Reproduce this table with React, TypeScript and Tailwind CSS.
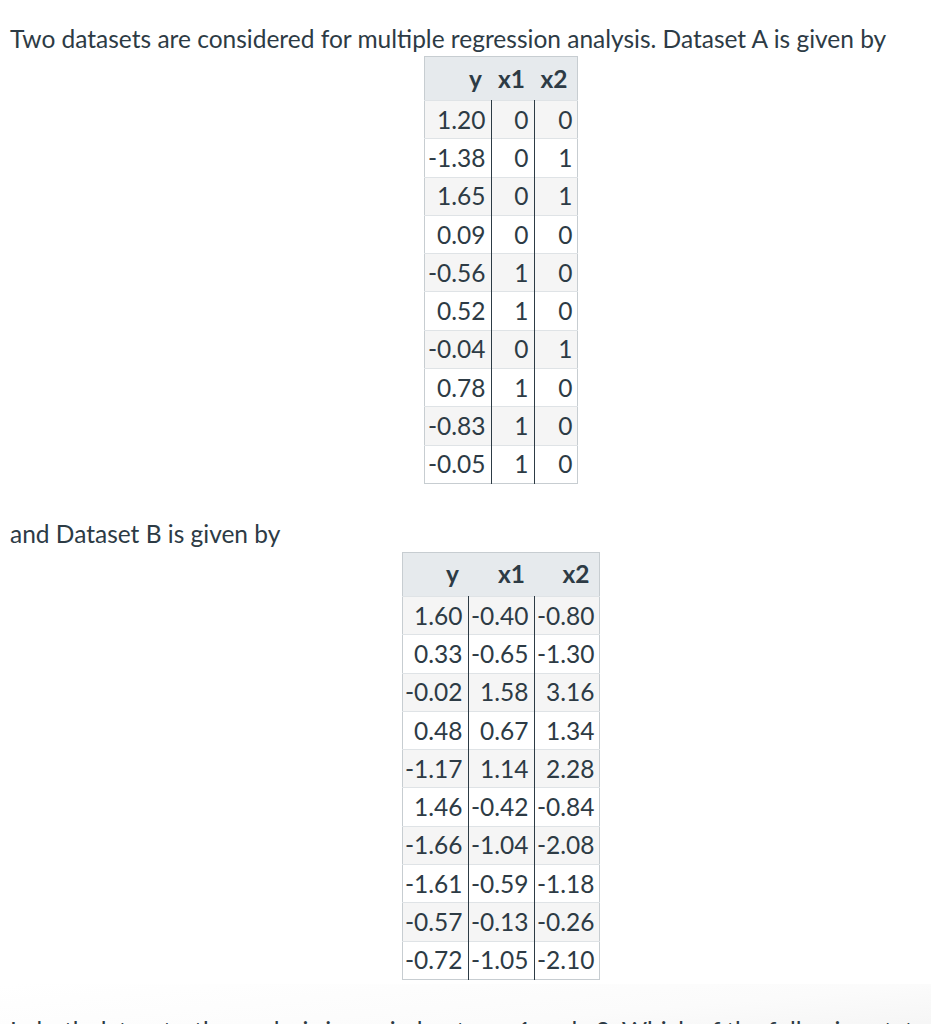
const datasetA: [string, string, string][] = [
  ["1.20", "0", "0"],
  ["-1.38", "0", "1"],
  ["1.65", "0", "1"],
  ["0.09", "0", "0"],
  ["-0.56", "1", "0"],
  ["0.52", "1", "0"],
  ["-0.04", "0", "1"],
  ["0.78", "1", "0"],
  ["-0.83", "1", "0"],
  ["-0.05", "1", "0"],
];

const datasetB: [string, string, string][] = [
  ["1.60", "-0.40", "-0.80"],
  ["0.33", "-0.65", "-1.30"],
  ["-0.02", "1.58", "3.16"],
  ["0.48", "0.67", "1.34"],
  ["-1.17", "1.14", "2.28"],
  ["1.46", "-0.42", "-0.84"],
  ["-1.66", "-1.04", "-2.08"],
  ["-1.61", "-0.59", "-1.18"],
  ["-0.57", "-0.13", "-0.26"],
  ["-0.72", "-1.05", "-2.10"],
];

function DataTable({ rows, widths }: { rows: [string, string, string][]; widths: string[] }) {
  return (
    <table className="border-collapse border border-[#c7cdd1] text-[#2d3b45]">
      <thead>
        <tr className="h-[44px] bg-[#e6eaed]">
          {["y", "x1", "x2"].map((h, i) => (
            <th key={h} className={`${widths[i]} pr-[9px] text-right font-bold`}>
              {h}
            </th>
          ))}
        </tr>
      </thead>
      <tbody>
        {rows.map((r, i) => (
          <tr key={i} className={`h-[38.3px] border-t border-[#dfe3e6] ${i % 2 === 0 ? "bg-[#f5f5f5]" : "bg-white"}`}>
            <td className="pr-[5px] text-right">{r[0]}</td>
            <td className="border-l border-[#2d3b45] pr-[5px] text-right">{r[1]}</td>
            <td className="border-l border-[#2d3b45] pr-[4px] text-right">{r[2]}</td>
          </tr>
        ))}
      </tbody>
    </table>
  );
}

export default function App() {
  return (
    <div className="h-[1024px] overflow-hidden bg-white font-['Lato',sans-serif] text-[24.5px] leading-[34px] text-[#2d3b45]">
      <p className="pl-[10px] pt-[22px]">
        Two datasets are considered for multiple regression analysis. Dataset A is given by
      </p>
      <div className="flex justify-center pl-[70px]">
        <DataTable rows={datasetA} widths={["w-[67px]", "w-[43px]", "w-[43px]"]} />
      </div>
      <p className="pl-[10px] pt-[33px]">and Dataset B is given by</p>
      <div className="flex justify-center pl-[70px] pt-[1px]">
        <DataTable rows={datasetB} widths={["w-[66px]", "w-[66px]", "w-[65px]"]} />
      </div>
      <div className="mt-[4px] bg-gradient-to-br from-white via-[#fbfbfb] to-[#f0f0f0] pl-[10px] pt-[30px] pb-[20px]">
        <p className="whitespace-nowrap">
          In both datasets, the analysis is carried out on x1 and x2. Which of the following statements is true?
        </p>
      </div>
    </div>
  );
}
